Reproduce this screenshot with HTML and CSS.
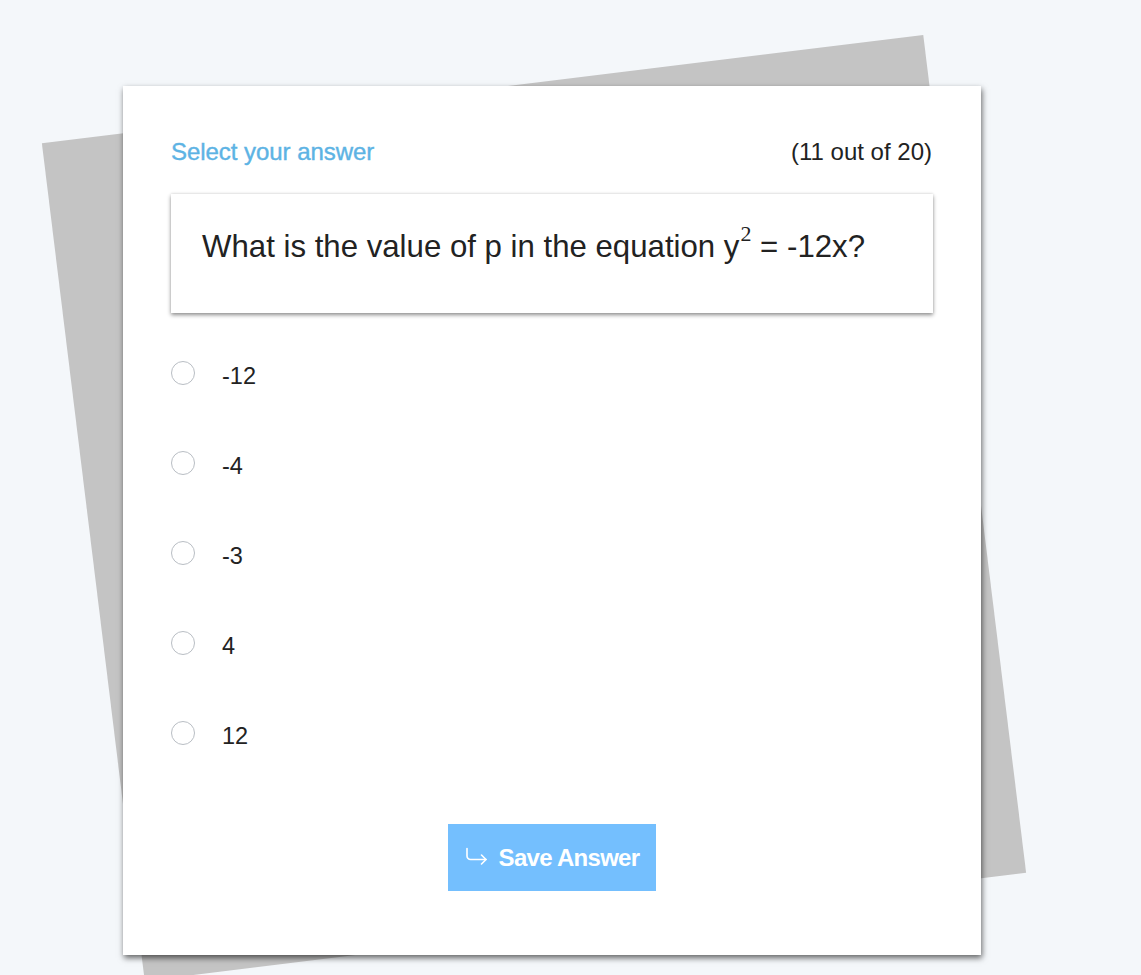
FILE: index.html
```html
<!DOCTYPE html>
<html lang="en">
<head>
<meta charset="utf-8">
<title>Quiz</title>
<link rel="stylesheet" href="styles.css">
</head>
<body>
<div class="stage">
  <div class="card">
    <div class="card-head">
      <h2 class="title">Select your answer</h2>
      <span class="counter">(11 out of 20)</span>
    </div>
    <div class="question">
      <p class="q-text">What is the value of p in the equation y<sup class="sup">2</sup> = -12x?</p>
    </div>
    <ul class="options">
      <li class="option"><span class="radio"></span><span class="opt-label">-12</span></li>
      <li class="option"><span class="radio"></span><span class="opt-label">-4</span></li>
      <li class="option"><span class="radio"></span><span class="opt-label">-3</span></li>
      <li class="option"><span class="radio"></span><span class="opt-label">4</span></li>
      <li class="option"><span class="radio"></span><span class="opt-label">12</span></li>
    </ul>
    <div class="actions">
      <button class="save-btn" type="button">
        <svg class="save-icon" width="24" height="18" viewBox="0 0 24 18" fill="none" stroke="#fff" stroke-width="1.6" stroke-linecap="round" stroke-linejoin="round">
          <path d="M2 1.5 V9 a3.5 3.5 0 0 0 3.5 3.5 H21"/>
          <path d="M16.5 8 L21 12.5 L16.5 17"/>
        </svg>
        <span>Save Answer</span>
      </button>
    </div>
  </div>
</div>
</body>
</html>
```

FILE: styles.css
```css
html, body {
  margin: 0;
  padding: 0;
}
body {
  background: #f4f7fa;
  font-family: "Liberation Sans", Arial, sans-serif;
  color: #222;
  height: 975px;
  overflow: hidden;
}
.stage {
  position: relative;
  padding: 86px 0 0 123px;
}
.stage::before {
  content: "";
  position: absolute;
  left: 89.5px;
  top: 86px;
  width: 888px;
  height: 844px;
  background: #c4c4c4;
  transform: rotate(-7deg);
  z-index: 0;
}
.card {
  position: relative;
  z-index: 1;
  box-sizing: border-box;
  width: 858px;
  height: 869px;
  background: #fff;
  padding: 52px 48px 0 48px;
  box-shadow: 1px 3px 6px rgba(0, 0, 0, 0.6);
}
.card-head {
  display: flex;
  justify-content: space-between;
  align-items: center;
  height: 28px;
}
.title {
  margin: 0;
  font-size: 24px;
  font-weight: normal;
  letter-spacing: -0.05px;
  color: #5db3e4;
  line-height: 28px;
  -webkit-text-stroke: 0.4px #5db3e4;
}
.counter {
  font-size: 24px;
  color: #222;
  line-height: 28px;
  margin-right: 1px;
}
.question {
  margin-top: 28px;
  height: 119px;
  display: flex;
  align-items: center;
  padding: 0 31px;
  background: #fff;
  box-shadow: 0 2px 4px rgba(0, 0, 0, 0.45), 0 -1px 2px rgba(0, 0, 0, 0.06);
}
.q-text {
  margin: 0;
  font-size: 31.2px;
  line-height: 36px;
  color: #222;
  padding-bottom: 14px;
}
.sup {
  font-family: "Liberation Serif", "Times New Roman", serif;
  font-size: 22px;
  line-height: 0;
  vertical-align: 16px;
  margin-left: 1px;
}
.options {
  list-style: none;
  margin: 15px 0 0 0;
  padding: 0;
}
.option {
  height: 90px;
  display: flex;
  align-items: center;
}
.radio {
  box-sizing: border-box;
  width: 24px;
  height: 24px;
  border: 1px solid #b9bec4;
  border-radius: 50%;
  background: #fff;
  flex: none;
}
.opt-label {
  margin-left: 27px;
  font-size: 23.5px;
  color: #222;
  padding-top: 7px;
}
.actions {
  margin-top: 46px;
  display: flex;
  justify-content: center;
}
.save-btn {
  box-sizing: border-box;
  width: 208px;
  height: 67px;
  border: none;
  background: #74bffe;
  color: #fff;
  font-family: "Liberation Sans", Arial, sans-serif;
  font-weight: bold;
  font-size: 24px;
  letter-spacing: -0.7px;
  display: flex;
  align-items: center;
  justify-content: center;
  gap: 10px;
  padding: 0;
  cursor: pointer;
}
.save-icon {
  flex: none;
  margin-top: -4px;
}
```
